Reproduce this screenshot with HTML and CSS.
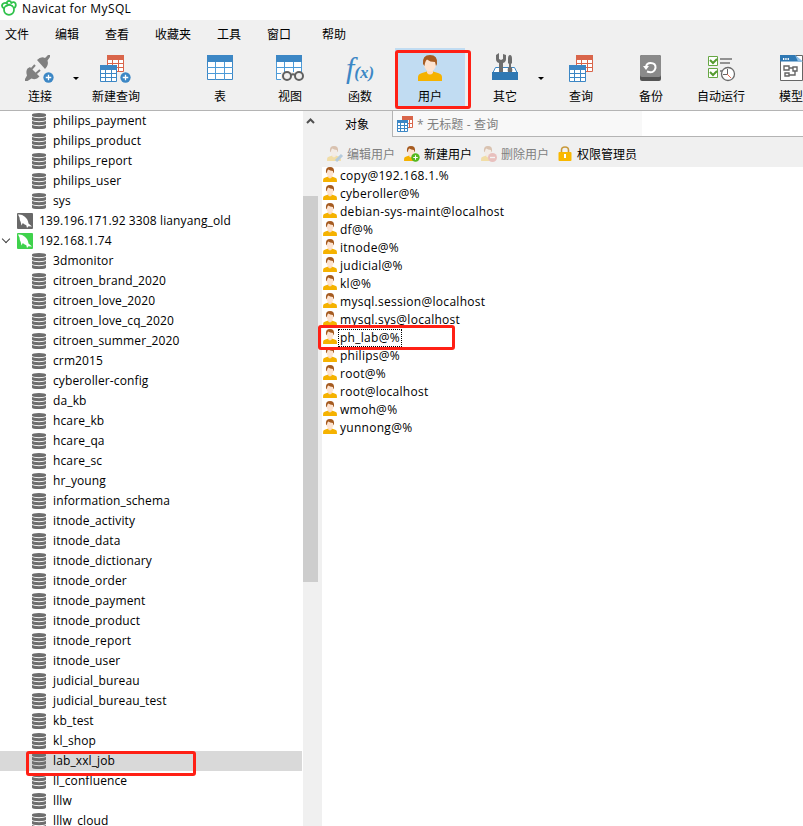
FILE: index.html
```html
<!DOCTYPE html>
<html lang="zh-CN">
<head>
    <meta charset="UTF-8">
    <title>Navicat for MySQL</title>
    <link rel="stylesheet" href="styles.css">
</head>
<body>
    <!-- Icon definitions -->
    <svg class="defs" width="0" height="0">
        <symbol id="db" viewBox="0 0 14 16">
            <path fill="#6e6e6e" d="M0 1.6Q0 0 7 0t7 1.6v1.2q0 1.4-7 1.4T0 2.800zM0 4.100q2 1.100 7 1.100t7-1.100v2.700q0 1.400-7 1.400T0 6.800zM0 8.100q2 1.100 7 1.100t7-1.100v2.700q0 1.400-7 1.400T0 10.800zM0 12.100q2 1.100 7 1.100t7-1.100v2.300Q14 16 7 16T0 14.400z"/>
        </symbol>
        <symbol id="dolphin" viewBox="0 0 16 16">
            <rect width="16" height="16" rx="1" fill="currentColor"/>
            <path fill="#fff" d="M1 1.500Q5 1 7.500 3.500 11 6 11.500 10.500l3.500 3-3.500-.2-1.500 1.700-.7-2.700Q7 11.500 5.800 10L4.500 12.500 3.700 9Q2.500 7 2.500 4.500z"/>
        </symbol>
        <symbol id="user" viewBox="0 0 24 26">
            <path fill="#f5b200" d="M0 26v-4q0-3 4-4l5-1.500h6l5 1.500q4 1 4 4v4z"/>
            <path fill="#fbdcc4" d="M9 13h6v5q-3 3-6 0z"/>
            <ellipse cx="12" cy="9" rx="6" ry="7.500" fill="#fde3d0"/>
            <path fill="#a65b20" d="M5 9Q4 0 12 0t7 9l-1 2-1-4Q12 7 9 4.500 7 6 6.500 11z"/>
        </symbol>
        <symbol id="grid-blue" viewBox="0 0 17 17">
            <path fill="#fff" stroke="#3c87c5" d="M.5.5h16v16H.5z"/>
            <path fill="#3c87c5" d="M0 0h17v5H0z"/>
            <path fill="none" stroke="#3c87c5" d="M0 8.500h17M0 12.500h17M5.500 5v12M11.500 5v12"/>
        </symbol>
        <symbol id="grid-red" viewBox="0 0 17 17">
            <path fill="#fff" stroke="#d9654a" d="M.5.5h16v16H.5z"/>
            <path fill="#d9654a" d="M0 0h17v5H0z"/>
            <path fill="none" stroke="#d9654a" d="M0 8.500h17M0 12.500h17M5.500 5v12M11.500 5v12"/>
        </symbol>
        <symbol id="plus" viewBox="0 0 12 12">
            <circle cx="6" cy="6" r="5.600" fill="currentColor"/>
            <path stroke="#fff" stroke-width="1.400" d="M6 3v6M3 6h6"/>
        </symbol>
        <symbol id="queries" viewBox="0 0 24 27">
            <use href="#grid-red" x="7" y="0" width="17" height="17"/>
            <use href="#grid-blue" x="0" y="10" width="17" height="17"/>
        </symbol>
    </svg>

    <div class="titlebar">
        <svg width="16" height="16" viewBox="0 0 16 16" fill="none" stroke="#2fc24b" stroke-width="1.800">
            <path d="M3 8.500Q0 6.500 1.500 4.200 3.500 2 6 3.500 5.500 1 8.200.9 10 1 10.300 3 13 1 14.500 3.500q1 2.800-1.300 4.700"/>
            <circle cx="8" cy="9.800" r="5"/>
            <path stroke-width="1.200" d="M4.500 6.500Q7 6 8 4.200q1.500 1.800 4 2"/>
        </svg>
        <span>Navicat for MySQL</span>
    </div>

    <div class="menubar">
        <span>文件</span>
        <span>编辑</span>
        <span>查看</span>
        <span>收藏夹</span>
        <span>工具</span>
        <span>窗口</span>
        <span>帮助</span>
    </div>

    <!-- Main toolbar -->
    <div class="toolbar">
        <div class="tool">
            <svg width="32" height="28" viewBox="0 0 32 28">
                <g fill="#808080">
                    <path d="M13 5q4-4 8-2l3-3h2v2l-2.500 3.500Q25 10 21 14z"/>
                    <path d="M3.500 13.500l2.500-1.500 9.500 9.500q-3.500 4-8 2L3.500 26H1v-2l2-3.500q-1.500-4 .5-7z"/>
                    <path stroke="#808080" stroke-width="2" d="M7.500 14l3.500-4M12 18.500l4-3.500"/>
                </g>
                <use href="#plus" x="19" y="17" width="11" height="11" class="blue"/>
            </svg>
            <span>连接</span>
        </div>
        <i class="arrow first"></i>
        <div class="tool">
            <svg width="32" height="28" viewBox="0 0 32 28">
                <use href="#queries" x="0" y="0" width="24" height="27"/>
                <use href="#plus" x="20" y="17" width="11" height="11" class="blue"/>
            </svg>
            <span>新建查询</span>
        </div>
        <div class="separator"></div>
        <div class="tool">
            <svg width="26" height="28" viewBox="0 0 26 28">
                <path fill="#fff" stroke="#3c87c5" d="M.5.500h25v24H.5z"/>
                <path fill="#3c87c5" d="M0 0h26v7H0z"/>
                <path fill="none" stroke="#4d9bd8" d="M0 12.500h26M0 18.500h26M8.500 7v18M17.500 7v18"/>
            </svg>
            <span>表</span>
        </div>
        <div class="tool">
            <svg width="28" height="28" viewBox="0 0 28 28">
                <path fill="#fff" d="M.5.500h25v24H.5z"/>
                <path fill="#3c87c5" d="M0 0h26v7H0z"/>
                <path fill="none" stroke="#4d9bd8" d="M0 12.500h26M0 18.500h26M8.500 7v12M17.500 7v12M.5 7v17.500h5M25.500 7v11"/>
                <path fill="#f0f0f0" d="M5 17h23v9H5z"/>
                <g fill="#f0f0f0" stroke="#606060" stroke-width="2">
                    <circle cx="11" cy="21" r="4"/>
                    <circle cx="23" cy="21" r="4"/>
                    <path d="M15 20q2-1.500 4 0"/>
                </g>
            </svg>
            <span>视图</span>
        </div>
        <div class="tool">
            <b class="fx">f<small>(x)</small></b>
            <span>函数</span>
        </div>
        <div class="tool active">
            <svg width="24" height="28" viewBox="0 0 24 28"><use href="#user" x="0" y="0" width="24" height="26"/></svg>
            <span>用户</span>
            <div class="mark mark-tool"></div>
        </div>
        <div class="tool others">
            <svg width="26" height="28" viewBox="0 0 26 28">
                <path fill="#fff" stroke="#3c87c5" d="M3.500 12.500h19l3 6H.5z"/>
                <path fill="#6d6d6d" d="M4 0v4q0 3 3 4v9h4V8q3-1 3-4V0l-3-1v5l-2 1-2-1v-6zM18 0q2 0 2 4v4l-1 1v3q2 1 1 5h-4q-1-4 1-5V9l-1-1V4q0-4 2-4z"/>
                <path fill="#2f78b3" d="M0 17h26v8H0z"/>
            </svg>
            <span>其它</span>
        </div>
        <i class="arrow"></i>
        <div class="tool after-arrow">
            <svg width="24" height="28" viewBox="0 0 24 28"><use href="#queries" x="0" y="0" width="24" height="27"/></svg>
            <span>查询</span>
        </div>
        <div class="tool">
            <svg width="22" height="28" viewBox="0 0 22 28">
                <rect width="21" height="26" rx="2" fill="#555"/>
                <rect width="21" height="22" rx="2" fill="#8a8a8a"/>
                <path fill="none" stroke="#fff" stroke-width="2" d="M7 16.500q7 2.500 8.500-3.500.5-5-5-5-4 0-4.500 4"/>
                <path fill="#fff" d="M3 11h6l-3 4z"/>
            </svg>
            <span>备份</span>
        </div>
        <div class="tool">
            <svg width="28" height="28" viewBox="0 0 28 28">
                <path fill="#fff" stroke="#67a744" d="M1.500 1.500h9v9h-9zM1.500 13.500h9v9h-9z"/>
                <path fill="none" stroke="#559b30" stroke-width="2" d="M3 5l3 3 4-4M3 17l3 3 4-4"/>
                <path stroke="#929292" stroke-width="2" d="M13 4h12M13 8h10M13 16h3"/>
                <circle cx="21" cy="19" r="6.500" fill="#fff" stroke="#6a6a6a" stroke-width="1.300"/>
                <path fill="none" stroke="#666" d="M20.500 14v5.500H16"/>
                <path stroke="#e36f55" d="M20 19l4 4"/>
            </svg>
            <span>自动运行</span>
        </div>
        <div class="tool">
            <svg width="24" height="28" viewBox="0 0 24 28">
                <path fill="#fff" stroke="#666" d="M1.500.500h22v25h-22z"/>
                <path fill="#2f78b3" d="M1 0h15l7 6.500H1z"/>
                <path fill="#8ec0e8" d="M16 0l8 6.500h-5z"/>
                <path stroke="#fff" stroke-width="2" stroke-dasharray="1.300 1" d="M4 4h6"/>
                <path fill="none" stroke="#666" stroke-width="1.400" d="M5 11h5v4H5zM14 12h4v4h-4zM6 18h4v3H6zM10 13h4M16 16v4h-6"/>
            </svg>
            <span>模型</span>
        </div>
    </div>

    <div class="main">
        <!-- Connection tree -->
        <div class="tree">
            <div class="row"><svg><use href="#db"/></svg>philips_payment</div>
            <div class="row"><svg><use href="#db"/></svg>philips_product</div>
            <div class="row"><svg><use href="#db"/></svg>philips_report</div>
            <div class="row"><svg><use href="#db"/></svg>philips_user</div>
            <div class="row"><svg><use href="#db"/></svg>sys</div>
            <div class="row conn"><i></i><svg><use href="#dolphin"/></svg>139.196.171.92 3308 lianyang_old</div>
            <div class="row conn open"><i></i><svg><use href="#dolphin"/></svg>192.168.1.74</div>
            <div class="row"><svg><use href="#db"/></svg>3dmonitor</div>
            <div class="row"><svg><use href="#db"/></svg>citroen_brand_2020</div>
            <div class="row"><svg><use href="#db"/></svg>citroen_love_2020</div>
            <div class="row"><svg><use href="#db"/></svg>citroen_love_cq_2020</div>
            <div class="row"><svg><use href="#db"/></svg>citroen_summer_2020</div>
            <div class="row"><svg><use href="#db"/></svg>crm2015</div>
            <div class="row"><svg><use href="#db"/></svg>cyberoller-config</div>
            <div class="row"><svg><use href="#db"/></svg>da_kb</div>
            <div class="row"><svg><use href="#db"/></svg>hcare_kb</div>
            <div class="row"><svg><use href="#db"/></svg>hcare_qa</div>
            <div class="row"><svg><use href="#db"/></svg>hcare_sc</div>
            <div class="row"><svg><use href="#db"/></svg>hr_young</div>
            <div class="row"><svg><use href="#db"/></svg>information_schema</div>
            <div class="row"><svg><use href="#db"/></svg>itnode_activity</div>
            <div class="row"><svg><use href="#db"/></svg>itnode_data</div>
            <div class="row"><svg><use href="#db"/></svg>itnode_dictionary</div>
            <div class="row"><svg><use href="#db"/></svg>itnode_order</div>
            <div class="row"><svg><use href="#db"/></svg>itnode_payment</div>
            <div class="row"><svg><use href="#db"/></svg>itnode_product</div>
            <div class="row"><svg><use href="#db"/></svg>itnode_report</div>
            <div class="row"><svg><use href="#db"/></svg>itnode_user</div>
            <div class="row"><svg><use href="#db"/></svg>judicial_bureau</div>
            <div class="row"><svg><use href="#db"/></svg>judicial_bureau_test</div>
            <div class="row"><svg><use href="#db"/></svg>kb_test</div>
            <div class="row"><svg><use href="#db"/></svg>kl_shop</div>
            <div class="row selected"><svg><use href="#db"/></svg>lab_xxl_job<div class="mark mark-db"></div></div>
            <div class="row"><svg><use href="#db"/></svg>ll_confluence</div>
            <div class="row"><svg><use href="#db"/></svg>lllw</div>
            <div class="row"><svg><use href="#db"/></svg>lllw_cloud</div>
        </div>
        <div class="scrollbar">
            <svg width="9" height="6" viewBox="0 0 9 6"><path fill="none" stroke="#505050" stroke-width="2" d="M1 5l3.500-3.500L8 5"/></svg>
            <div class="thumb"></div>
        </div>

        <div class="content">
            <div class="tabs">
                <div class="tab current">对象</div>
                <div class="tabs-rest">
                    <div class="tab query">
                        <svg width="16" height="16" viewBox="0 0 16 16">
                            <path fill="#fff" stroke="#d9654a" d="M5.500.5h10v11h-10z"/>
                            <path fill="#d9654a" d="M5 0h11v4H5z"/>
                            <path stroke="#d9654a" d="M5 7.500h11M12.500 4v8"/>
                            <path fill="#fff" stroke="#3c87c5" d="M.5 4.500h10v11H.5z"/>
                            <path fill="#3c87c5" d="M0 4h11v3H0z"/>
                            <path stroke="#3c87c5" d="M0 9.500h11M0 12.500h11M3.500 7v9M7.500 7v9"/>
                        </svg>
                        * 无标题 - 查询
                    </div>
                </div>
            </div>

            <div class="actions">
                <div class="action disabled">
                    <svg width="16" height="16" viewBox="0 0 16 16">
                        <use href="#user" width="14" height="15"/>
                        <path stroke="#2f78b3" stroke-width="3" d="M9 15l6-6"/>
                    </svg>
                    <span>编辑用户</span>
                </div>
                <div class="action">
                    <svg width="16" height="16" viewBox="0 0 16 16">
                        <use href="#user" width="14" height="15"/>
                        <use href="#plus" x="7" y="7" width="9" height="9" class="green"/>
                    </svg>
                    <span>新建用户</span>
                </div>
                <div class="action disabled">
                    <svg width="16" height="16" viewBox="0 0 16 16">
                        <use href="#user" width="14" height="15"/>
                        <circle cx="11.500" cy="11.500" r="4.500" fill="#d9544f"/>
                        <path stroke="#fff" stroke-width="1.300" d="M9 11.500h5"/>
                    </svg>
                    <span>删除用户</span>
                </div>
                <div class="action">
                    <svg width="15" height="16" viewBox="0 0 15 16">
                        <path fill="none" stroke="#c99a3c" stroke-width="1.600" d="M3.500 7V4q0-3 3.500-3t3.500 3v3"/>
                        <rect x="0.500" y="6" width="13" height="9" rx="1" fill="#f9b800"/>
                        <path fill="#fff" d="M6 8h2v4H6z"/>
                    </svg>
                    <span>权限管理员</span>
                </div>
            </div>

            <!-- User list -->
            <div class="users">
                <div class="user"><svg><use href="#user"/></svg><span>copy@192.168.1.%</span></div>
                <div class="user"><svg><use href="#user"/></svg><span>cyberoller@%</span></div>
                <div class="user"><svg><use href="#user"/></svg><span>debian-sys-maint@localhost</span></div>
                <div class="user"><svg><use href="#user"/></svg><span>df@%</span></div>
                <div class="user"><svg><use href="#user"/></svg><span>itnode@%</span></div>
                <div class="user"><svg><use href="#user"/></svg><span>judicial@%</span></div>
                <div class="user"><svg><use href="#user"/></svg><span>kl@%</span></div>
                <div class="user"><svg><use href="#user"/></svg><span>mysql.session@localhost</span></div>
                <div class="user"><svg><use href="#user"/></svg><span>mysql.sys@localhost</span></div>
                <div class="user focused"><svg><use href="#user"/></svg><span>ph_lab@%</span><div class="mark mark-user"></div></div>
                <div class="user"><svg><use href="#user"/></svg><span>philips@%</span></div>
                <div class="user"><svg><use href="#user"/></svg><span>root@%</span></div>
                <div class="user"><svg><use href="#user"/></svg><span>root@localhost</span></div>
                <div class="user"><svg><use href="#user"/></svg><span>wmoh@%</span></div>
                <div class="user"><svg><use href="#user"/></svg><span>yunnong@%</span></div>
            </div>
        </div>
    </div>
</body>
</html>
```
FILE: styles.css
```css
* {
    box-sizing: border-box;
}

body {
    margin: 0;
    height: 826px;
    display: flex;
    flex-direction: column;
    overflow: hidden;
    background: #fff;
    color: #000;
    font-family: "Open Sans", "Noto Sans CJK SC", sans-serif;
    font-size: 12px;
    white-space: nowrap;
}

svg {
    flex: none;
    display: block;
    overflow: visible;
}

.defs {
    position: absolute;
}

.blue {
    color: #3c87c5;
}

.green {
    color: #55b820;
}

.titlebar {
    flex: none;
    height: 20px;
    display: flex;
    align-items: center;
    gap: 5px;
    padding: 0 0 3px 1px;
    letter-spacing: 0.38px;
}

.titlebar svg {
    margin-top: -2px;
}

.menubar {
    flex: none;
    height: 28px;
    display: flex;
    align-items: center;
    gap: 26px;
    padding: 0 0 1px 5px;
    background: #f0f0f0;
}

.menubar span:last-child {
    margin-left: 5px;
}

/* Toolbar */
.toolbar {
    flex: none;
    height: 63px;
    display: flex;
    padding-left: 5px;
    background: #f0f0f0;
    border-bottom: 1px solid #b4b4b4;
}

.tool {
    flex: none;
    position: relative;
    width: 70px;
    height: 61px;
    display: flex;
    flex-direction: column;
    align-items: center;
    padding-top: 7px;
    line-height: 18px;
}

.tool svg,
.tool .fx {
    height: 28px;
    margin-bottom: 5px;
}

.tool.active {
    background: #c1dcf2;
}

.tool.others {
    margin-left: 5px;
}

.tool.after-arrow {
    margin-left: 2px;
}

.fx {
    color: #3c87c5;
    font: italic 30px/26px "Liberation Serif", serif;
}

.fx small {
    font-size: 17px;
    font-weight: bold;
}

.arrow {
    width: 6px;
    height: 3px;
    margin: 29px 0 0 -2px;
    border: 3px solid transparent;
    border-top-color: #000;
    border-bottom: 0;
}

.arrow.first {
    margin: 29px 2px 0 -2px;
}

.separator {
    width: 1px;
    margin: 1px 17px 2px 17px;
    background: #d2d2d2;
}

/* Red highlight frames */
.mark {
    position: absolute;
    z-index: 1;
    border: 3px solid #ff2015;
    border-radius: 3px;
}

.mark-tool {
    left: 0;
    top: 2px;
    width: 76px;
    height: 59px;
}

.mark-db {
    left: 26px;
    top: 0;
    width: 170px;
    height: 25px;
}

.mark-user {
    left: -4px;
    top: -4px;
    width: 137px;
    height: 25px;
}

.main {
    flex: 1;
    min-height: 0;
    display: flex;
}

/* Tree */
.tree {
    width: 303px;
    overflow: hidden;
    letter-spacing: 0.12px;
}

.row {
    position: relative;
    height: 20px;
    width: 302px;
    display: flex;
    align-items: center;
    padding: 0 0 1px 32px;
}

.row svg {
    width: 14px;
    height: 16px;
    margin: 1px 7px 0 0;
}

.row.selected {
    background: #d9d9d9;
}

.row.conn {
    padding-left: 3px;
}

.row.conn i {
    width: 6px;
    height: 6px;
    margin-right: 8px;
}

.row.conn svg {
    width: 16px;
    margin-right: 6px;
    color: #696969;
}

.row.conn.open i {
    border: solid #404040;
    border-width: 0 1.5px 1.5px 0;
    transform: translateY(-2px) rotate(45deg);
}

.row.conn.open svg {
    color: #3fd24c;
}

.scrollbar {
    width: 19px;
    background: #f0f0f0;
}

.scrollbar svg {
    margin: 7px 0 0 3px;
}

.thumb {
    width: 15px;
    height: 386px;
    margin-top: 72px;
    background: #cdcdcd;
}

/* Right side */
.content {
    flex: 1;
    min-width: 0;
}

.tabs {
    height: 26px;
    display: flex;
}

.tab {
    display: flex;
    align-items: center;
}

.tab.current {
    width: 70px;
    justify-content: center;
    background: #f0f0f0;
}

.tabs-rest {
    flex: 1;
    display: flex;
    border-left: 1px solid #b4b4b4;
    border-bottom: 1px solid #b4b4b4;
}

.tab.query {
    width: 249px;
    gap: 4px;
    padding-left: 4px;
    background: #f8f8f8;
    color: #808080;
    letter-spacing: 0.15px;
}

.actions {
    height: 30px;
    display: flex;
    align-items: center;
    gap: 9px;
    padding: 4px 0 0 5px;
    background: #f0f0f0;
}

.action {
    display: flex;
    align-items: center;
    gap: 4px;
}

.action.disabled {
    color: #808080;
}

.action.disabled svg {
    opacity: 0.3;
}

.users {
    letter-spacing: 0.28px;
}

.user {
    position: relative;
    height: 18px;
    display: flex;
    align-items: center;
    padding-left: 1px;
}

.user svg {
    width: 14px;
    height: 15px;
    margin: -3px 2px 0 0;
}

.user span {
    padding: 0 1px;
    line-height: 16px;
}

.user.focused span {
    outline: 1px dotted #000;
}
```
